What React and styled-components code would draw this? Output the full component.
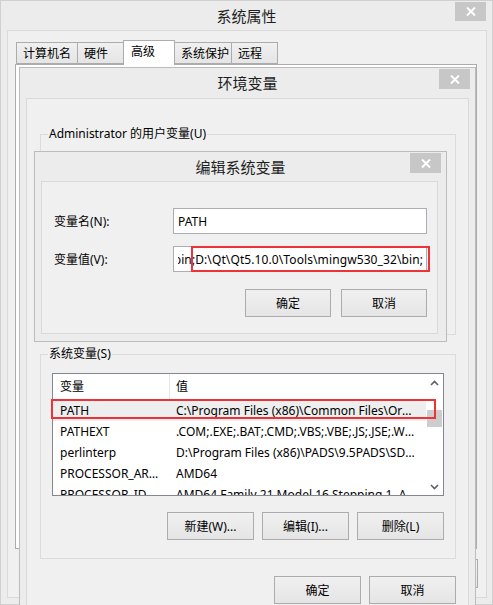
import React from "react";
import styled, { createGlobalStyle } from "styled-components";

const GlobalStyle = createGlobalStyle`
  html, body {
    margin: 0;
    padding: 0;
    background: #f0f0f0;
  }
  body {
    font-family: "Noto Sans", "Noto Sans CJK SC", sans-serif;
    font-size: 12px;
    color: #000;
  }
  * {
    box-sizing: border-box;
  }
`;

const Desktop = styled.div`
  position: relative;
  width: 493px;
  height: 605px;
  overflow: hidden;
`;

// a window frame; dialogs stacked on top of each other are placed on the desktop
const Window = styled.div`
  position: ${(p) => (p.$floating ? "absolute" : "relative")};
  left: ${(p) => p.$x || 0}px;
  top: ${(p) => p.$y || 0}px;
  width: ${(p) => p.$w}px;
  height: ${(p) => p.$h}px;
  border: 1px solid ${(p) => p.$edge || "#bcbcbc"};
  background: #ececec;
  display: flex;
  flex-direction: column;
`;

const TitleBar = styled.div`
  height: ${(p) => p.$h}px;
  flex: none;
  display: grid;
  grid-template-columns: 1fr auto 1fr;
  align-items: center;
`;

const Title = styled.div`
  grid-column: 2;
  font-family: "Noto Sans CJK SC", sans-serif;
  font-size: 15px;
  color: #1e1e1e;
  line-height: 20px;
`;

const CloseBtn = styled.div`
  grid-column: 3;
  justify-self: end;
  align-self: start;
  margin-top: 1px;
  margin-right: ${(p) => p.$gap || 5}px;
  width: 31px;
  height: ${(p) => p.$h || 20}px;
  background: #c7c7c7;
  display: flex;
  align-items: center;
  justify-content: center;
`;

const Client = styled.div`
  flex: 1;
  min-width: 0;
  margin: ${(p) => p.$m};
  border: 1px solid #dadada;
  background: #f0f0f0;
  display: flex;
  flex-direction: column;
  padding: ${(p) => p.$pad || "0"};
`;

/* ---- outer dialog: tabs ---- */

const TabStrip = styled.div`
  display: flex;
  align-items: flex-end;
  height: 24px;
  margin-left: 8px;
  position: relative;
  z-index: 1;
`;

const Tab = styled.div`
  width: ${(p) => p.$w}px;
  height: ${(p) => (p.$active ? 25 : 22)}px;
  margin-left: -1px;
  margin-bottom: ${(p) => (p.$active ? -1 : 0)}px;
  padding-left: ${(p) => (p.$active ? 7 : 6)}px;
  border: 1px solid #acacac;
  border-bottom: ${(p) => (p.$active ? "none" : "1px solid #acacac")};
  background: ${(p) =>
    p.$active ? "#fff" : "linear-gradient(#f0f0f0, #e5e5e5)"};
  font-family: "Noto Sans CJK SC", sans-serif;
  line-height: 20px;
  white-space: nowrap;
  &:first-child {
    margin-left: 0;
  }
`;

const TabPanel = styled.div`
  margin-left: 7px;
  width: 462px;
  height: 485px;
  border: 1px solid #acacac;
  background: #fff;
`;

const ButtonRow = styled.div`
  display: flex;
  justify-content: flex-end;
  gap: ${(p) => p.$gap || 8}px;
  margin-top: ${(p) => p.$top || 0}px;
  padding-right: ${(p) => p.$right || 0}px;
`;

const Btn = styled.button`
  width: ${(p) => p.$w || 86}px;
  height: ${(p) => p.$h || 28}px;
  padding: 0;
  border: 1px solid #acacac;
  background: linear-gradient(#f0f0f0, #e5e5e5);
  font-family: "Noto Sans", "Noto Sans CJK SC", sans-serif;
  font-size: 12px;
  color: #000;
`;

/* ---- environment dialog ---- */

const GroupBox = styled.div`
  margin-top: ${(p) => p.$top}px;
  width: 416px;
  height: ${(p) => (p.$h ? p.$h + "px" : "auto")};
  border: 1px solid #dcdcdc;
  padding: 0 11px 18px 11px;
  display: flex;
  flex-direction: column;
`;

const GroupLabel = styled.div`
  margin: -9px 0 0 -4px;
  padding: 0 1px;
  width: fit-content;
  line-height: 16px;
  background: #f0f0f0;
  white-space: nowrap;
`;

const ListView = styled.div`
  position: relative;
  margin-top: 11px;
  width: 392px;
  height: 123px;
  border: 1px solid #828790;
  background: #fff;
  display: flex;
`;

const ListBody = styled.div`
  flex: 1;
  min-width: 0;
  overflow: hidden;
`;

const ListRow = styled.div`
  display: grid;
  grid-template-columns: 117px minmax(0, 1fr);
  height: ${(p) => (p.$head ? 26 : 21)}px;
  background: ${(p) => (p.$selected ? "#eeeeee" : "transparent")};
`;

const Cell = styled.div`
  min-width: 0;
  line-height: ${(p) => (p.$head ? 26 : 21)}px;
  padding: 0 ${(p) => (p.$first ? 8 : 10)}px 0 ${(p) => (p.$first ? 7 : 6)}px;
  border-right: ${(p) => (p.$divider ? "1px solid #e5e5e5" : "none")};
  overflow: hidden;
  white-space: nowrap;
  text-overflow: ellipsis;
`;

const ScrollBar = styled.div`
  width: 17px;
  flex: none;
  display: flex;
  flex-direction: column;
  background: #fff;
`;

const ScrollArrow = styled.div`
  height: 17px;
  display: flex;
  align-items: center;
  justify-content: center;
`;

const ScrollTrack = styled.div`
  flex: 1;
  padding: 19px 1px 0 1px;
`;

const ScrollThumb = styled.div`
  height: 17px;
  background: #cdcdcd;
`;

const RedMark = styled.div`
  position: absolute;
  left: ${(p) => p.$l}px;
  top: ${(p) => p.$t}px;
  width: ${(p) => p.$w}px;
  height: ${(p) => p.$h}px;
  border: 2px solid #ee3338;
  pointer-events: none;
`;

/* ---- edit dialog ---- */

const FieldGrid = styled.div`
  display: grid;
  grid-template-columns: 119px minmax(0, 1fr);
  row-gap: 12px;
  align-items: center;
`;

const FieldLabel = styled.div`
  white-space: nowrap;
`;

const TextBox = styled.div`
  position: relative;
  min-width: 0;
  height: 26px;
  border: 1px solid #abadb3;
  background: #fff;
  display: flex;
  align-items: center;
  padding: 0 3px 0 4px;
`;

const TextClip = styled.div`
  flex: 1;
  min-width: 0;
  overflow: hidden;
  display: flex;
  justify-content: flex-end;
  span {
    flex: none;
    white-space: nowrap;
    letter-spacing: 0.1px;
  }
`;

function XIcon() {
  return (
    <svg width="10" height="9" viewBox="0 0 10 9">
      <path d="M1 0.5 L9 8.5 M9 0.5 L1 8.5" stroke="#fff" strokeWidth="2" />
    </svg>
  );
}

function Chevron({ up }) {
  return (
    <svg width="9" height="6" viewBox="0 0 9 6">
      <path
        d={up ? "M1 5 L4.5 1.5 L8 5" : "M1 1 L4.5 4.5 L8 1"}
        fill="none"
        stroke="#606060"
        strokeWidth="1.6"
      />
    </svg>
  );
}

const tabs = [
  { label: "计算机名", w: 62 },
  { label: "硬件", w: 47 },
  { label: "高级", w: 52, active: true },
  { label: "系统保护", w: 58 },
  { label: "远程", w: 47 },
];

const sysVars = [
  { name: "PATH", value: "C:\\Program Files (x86)\\Common Files\\Oracle\\Java\\javapath;C:\\Windows", selected: true },
  { name: "PATHEXT", value: ".COM;.EXE;.BAT;.CMD;.VBS;.VBE;.JS;.JSE;.WSF;.WSH;.MSC" },
  { name: "perlinterp", value: "D:\\Program Files (x86)\\PADS\\9.5PADS\\SDD_HOME\\common\\win32\\bin\\perl" },
  { name: "PROCESSOR_ARCHITECTURE", value: "AMD64" },
  { name: "PROCESSOR_IDENTIFIER", value: "AMD64 Family 21 Model 16 Stepping 1, AuthenticAMD" },
];

const pathValue =
  "%SystemRoot%\\system32;%SystemRoot%;C:\\Program Files\\Git\\cmd;D:\\Qt\\Qt5.10.0\\5.10.0\\mingw53_32\\bin;D:\\Qt\\Qt5.10.0\\Tools\\mingw530_32\\bin;";

export default function App() {
  return (
    <Desktop>
      <GlobalStyle />

      <Window $w={493} $h={605} $edge="#d0d0d0">
        <TitleBar $h={29}>
          <Title>系统属性</Title>
          <CloseBtn $gap={6} $h={19}>
            <XIcon />
          </CloseBtn>
        </TitleBar>
        <Client $m="0 5px 6px 6px" $pad="9px 0 0 0">
          <TabStrip>
            {tabs.map((t) => (
              <Tab key={t.label} $w={t.w} $active={t.active}>
                {t.label}
              </Tab>
            ))}
          </TabStrip>
          <TabPanel />
          <ButtonRow $top={10} $right={8} $gap={6}>
            <Btn $w={75} $h={29}>确定</Btn>
            <Btn $w={75} $h={29}>取消</Btn>
            <Btn $w={75} $h={29}>应用(A)</Btn>
          </ButtonRow>
        </Client>
      </Window>

      <Window $floating $x={19} $y={67} $w={457} $h={600}>
        <TitleBar $h={30}>
          <Title>环境变量</Title>
          <CloseBtn $gap={5}>
            <XIcon />
          </CloseBtn>
        </TitleBar>
        <Client $m="0 6px 0 6px" $pad="0 0 0 13px">
          <GroupBox $top={35} $h={201}>
            <GroupLabel>Administrator 的用户变量(U)</GroupLabel>
          </GroupBox>
          <GroupBox $top={19}>
            <GroupLabel>系统变量(S)</GroupLabel>
            <ListView>
              <ListBody>
                <ListRow $head>
                  <Cell $head $first $divider>变量</Cell>
                  <Cell $head>值</Cell>
                </ListRow>
                {sysVars.map((v) => (
                  <ListRow key={v.name} $selected={v.selected}>
                    <Cell $first>{v.name}</Cell>
                    <Cell>{v.value}</Cell>
                  </ListRow>
                ))}
              </ListBody>
              <ScrollBar>
                <ScrollArrow>
                  <Chevron up />
                </ScrollArrow>
                <ScrollTrack>
                  <ScrollThumb />
                </ScrollTrack>
                <ScrollArrow>
                  <Chevron />
                </ScrollArrow>
              </ScrollBar>
              <RedMark $l={-2} $t={25} $w={385} $h={20} />
            </ListView>
            <ButtonRow $top={16} $gap={8}>
              <Btn $w={87}>新建(W)...</Btn>
              <Btn $w={87}>编辑(I)...</Btn>
              <Btn $w={87}>删除(L)</Btn>
            </ButtonRow>
          </GroupBox>
          <ButtonRow $top={17} $right={12} $gap={8}>
            <Btn $w={87}>确定</Btn>
            <Btn $w={87}>取消</Btn>
          </ButtonRow>
        </Client>
      </Window>

      <Window $floating $x={34} $y={151} $w={413} $h={191}>
        <TitleBar $h={29}>
          <Title>编辑系统变量</Title>
          <CloseBtn $gap={5}>
            <XIcon />
          </CloseBtn>
        </TitleBar>
        <Client $m="0 8px 7px 6px" $pad="26px 10px 0 12px">
          <FieldGrid>
            <FieldLabel>变量名(N):</FieldLabel>
            <TextBox>PATH</TextBox>
            <FieldLabel>变量值(V):</FieldLabel>
            <TextBox>
              <TextClip>
                <span>{pathValue}</span>
              </TextClip>
              <RedMark $l={17} $t={-1} $w={239} $h={26} />
            </TextBox>
          </FieldGrid>
          <ButtonRow $top={17} $gap={10}>
            <Btn>确定</Btn>
            <Btn>取消</Btn>
          </ButtonRow>
        </Client>
      </Window>
    </Desktop>
  );
}
